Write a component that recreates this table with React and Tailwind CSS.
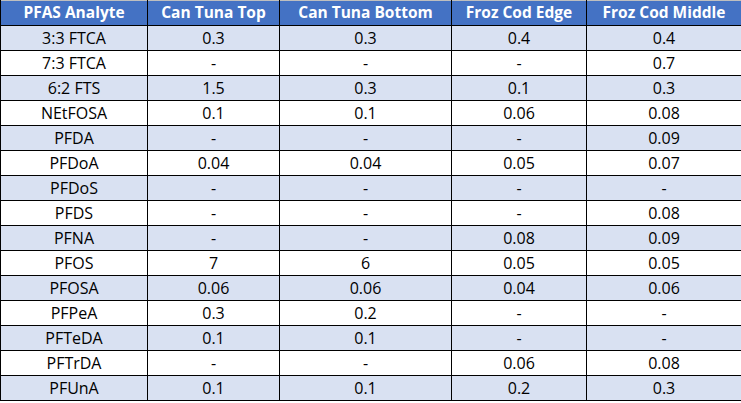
const COLS = ['PFAS Analyte', 'Can Tuna Top', 'Can Tuna Bottom', 'Froz Cod Edge', 'Froz Cod Middle']

const ROWS = [
  ['3:3 FTCA', '0.3', '0.3', '0.4', '0.4'],
  ['7:3 FTCA', '-', '-', '-', '0.7'],
  ['6:2 FTS', '1.5', '0.3', '0.1', '0.3'],
  ['NEtFOSA', '0.1', '0.1', '0.06', '0.08'],
  ['PFDA', '-', '-', '-', '0.09'],
  ['PFDoA', '0.04', '0.04', '0.05', '0.07'],
  ['PFDoS', '-', '-', '-', '-'],
  ['PFDS', '-', '-', '-', '0.08'],
  ['PFNA', '-', '-', '0.08', '0.09'],
  ['PFOS', '7', '6', '0.05', '0.05'],
  ['PFOSA', '0.06', '0.06', '0.04', '0.06'],
  ['PFPeA', '0.3', '0.2', '-', '-'],
  ['PFTeDA', '0.1', '0.1', '-', '-'],
  ['PFTrDA', '-', '-', '0.06', '0.08'],
  ['PFUnA', '0.1', '0.1', '0.2', '0.3'],
]

const WIDTHS = ['w-[147px]', 'w-[132px]', 'w-[172px]', 'w-[135px]', 'w-[155px]']

export default function App() {
  return (
    <div className="w-[741px] h-[403px] bg-white font-['Open_Sans','Liberation_Sans',sans-serif] text-[16px] text-black">
      <table className="w-[741px] table-fixed border-collapse">
        <colgroup>
          {WIDTHS.map((w, i) => (
            <col key={i} className={w} />
          ))}
        </colgroup>
        <thead>
          <tr className="h-[25px] bg-[#4472c4] border-t border-t-[#bfbfbf]">
            {COLS.map((c) => (
              <th key={c} className="border-x border-b border-black p-0 text-center text-[15.5px] font-bold text-white leading-none">
                {c}
              </th>
            ))}
          </tr>
        </thead>
        <tbody>
          {ROWS.map((row, i) => (
            <tr key={row[0]} className={i % 2 === 0 ? 'h-[25px] bg-[#d9e1f2]' : 'h-[25px] bg-white'}>
              {row.map((v, j) => (
                <td key={j} className="border border-black p-0 text-center leading-none">
                  {v}
                </td>
              ))}
            </tr>
          ))}
        </tbody>
      </table>
    </div>
  )
}
